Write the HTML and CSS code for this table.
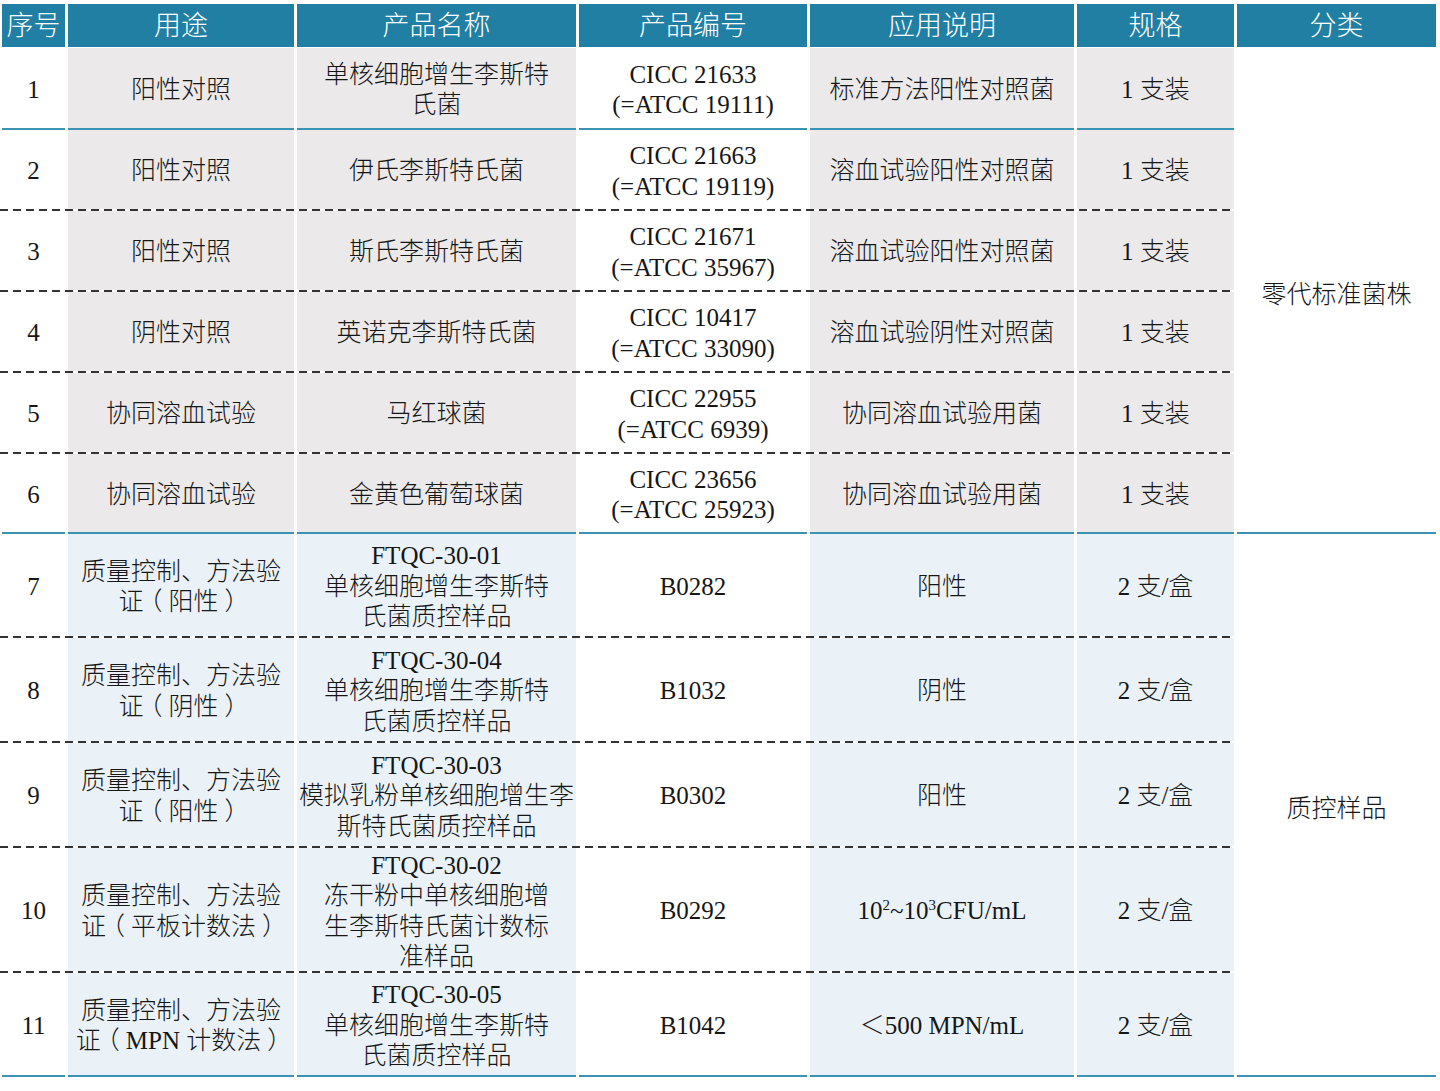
FILE: index.html
```html
<!DOCTYPE html>
<html lang="zh">
<head>
<meta charset="utf-8">
<title>产品列表</title>
<link rel="stylesheet" href="styles.css">
</head>
<body>
<div class="table">
  <div class="head">
    <div class="h">序号</div>
    <div class="h">用途</div>
    <div class="h">产品名称</div>
    <div class="h">产品编号</div>
    <div class="h">应用说明</div>
    <div class="h">规格</div>
    <div class="h">分类</div>
  </div>
  <div class="body">
    <!-- row 1 -->
    <div class="c end">1</div>
    <div class="c g end">阳性对照</div>
    <div class="c g end">单核细胞增生李斯特<br>氏菌</div>
    <div class="c end">CICC 21633<br>(=ATCC 19111)</div>
    <div class="c g end">标准方法阳性对照菌</div>
    <div class="c g end">1 支装</div>
    <div class="c cat cat1 end">零代标准菌株</div>
    <!-- row 2 -->
    <div class="c">2</div>
    <div class="c g">阳性对照</div>
    <div class="c g">伊氏李斯特氏菌</div>
    <div class="c">CICC 21663<br>(=ATCC 19119)</div>
    <div class="c g">溶血试验阳性对照菌</div>
    <div class="c g">1 支装</div>
    <div class="dash"></div>
    <!-- row 3 -->
    <div class="c">3</div>
    <div class="c g">阳性对照</div>
    <div class="c g">斯氏李斯特氏菌</div>
    <div class="c">CICC 21671<br>(=ATCC 35967)</div>
    <div class="c g">溶血试验阳性对照菌</div>
    <div class="c g">1 支装</div>
    <div class="dash"></div>
    <!-- row 4 -->
    <div class="c">4</div>
    <div class="c g">阴性对照</div>
    <div class="c g">英诺克李斯特氏菌</div>
    <div class="c">CICC 10417<br>(=ATCC 33090)</div>
    <div class="c g">溶血试验阴性对照菌</div>
    <div class="c g">1 支装</div>
    <div class="dash"></div>
    <!-- row 5 -->
    <div class="c">5</div>
    <div class="c g">协同溶血试验</div>
    <div class="c g">马红球菌</div>
    <div class="c">CICC 22955<br>(=ATCC 6939)</div>
    <div class="c g">协同溶血试验用菌</div>
    <div class="c g">1 支装</div>
    <div class="dash"></div>
    <!-- row 6 -->
    <div class="c end">6</div>
    <div class="c g end">协同溶血试验</div>
    <div class="c g end">金黄色葡萄球菌</div>
    <div class="c end">CICC 23656<br>(=ATCC 25923)</div>
    <div class="c g end">协同溶血试验用菌</div>
    <div class="c g end">1 支装</div>
    <!-- row 7 -->
    <div class="c">7</div>
    <div class="c b"><span>质量控制、方法验<br><span class="sl">证</span><span class="po">（</span>阳性<span class="pc">）</span></span></div>
    <div class="c b">FTQC-30-01<br>单核细胞增生李斯特<br>氏菌质控样品</div>
    <div class="c">B0282</div>
    <div class="c b">阳性</div>
    <div class="c b">2 支/盒</div>
    <div class="c cat cat2 end">质控样品</div>
    <div class="dash"></div>
    <!-- row 8 -->
    <div class="c">8</div>
    <div class="c b"><span>质量控制、方法验<br><span class="sl">证</span><span class="po">（</span>阴性<span class="pc">）</span></span></div>
    <div class="c b">FTQC-30-04<br>单核细胞增生李斯特<br>氏菌质控样品</div>
    <div class="c">B1032</div>
    <div class="c b">阴性</div>
    <div class="c b">2 支/盒</div>
    <div class="dash"></div>
    <!-- row 9 -->
    <div class="c">9</div>
    <div class="c b"><span>质量控制、方法验<br><span class="sl">证</span><span class="po">（</span>阳性<span class="pc">）</span></span></div>
    <div class="c b">FTQC-30-03<br>模拟乳粉单核细胞增生李<br>斯特氏菌质控样品</div>
    <div class="c">B0302</div>
    <div class="c b">阳性</div>
    <div class="c b">2 支/盒</div>
    <div class="dash"></div>
    <!-- row 10 -->
    <div class="c">10</div>
    <div class="c b"><span>质量控制、方法验<br><span class="sl">证</span><span class="po">（</span>平板计数法<span class="pc">）</span></span></div>
    <div class="c b">FTQC-30-02<br>冻干粉中单核细胞增<br>生李斯特氏菌计数标<br>准样品</div>
    <div class="c">B0292</div>
    <div class="c b"><span>10<sup class="sup">2</sup>~10<sup class="sup">3</sup>CFU/mL</span></div>
    <div class="c b">2 支/盒</div>
    <div class="dash"></div>
    <!-- row 11 -->
    <div class="c end">11</div>
    <div class="c b end"><span>质量控制、方法验<br><span class="sl">证</span><span class="po">（</span>MPN 计数法<span class="pc">）</span></span></div>
    <div class="c b end">FTQC-30-05<br>单核细胞增生李斯特<br>氏菌质控样品</div>
    <div class="c end">B1042</div>
    <div class="c b end">＜500 MPN/mL</div>
    <div class="c b end">2 支/盒</div>
  </div>
</div>
</body>
</html>
```

FILE: styles.css
```css
html, body {
  margin: 0;
  padding: 0;
  background: #ffffff;
}

body {
  font-family: "Liberation Serif", "Noto Sans CJK SC", serif;
  font-weight: 300;
  color: #161616;
  text-spacing-trim: space-all;
}

.table {
  margin: 4px 0 0 2px;
  width: 1434px;
}

.head,
.body {
  display: grid;
  grid-template-columns: 63px 226px 279px 228px 264px 157px 199px;
  column-gap: 3px;
}

.head {
  height: 42px;
  margin-bottom: 2px;
}

.h {
  background: #217fa3;
  color: #ffffff;
  font-family: "Noto Sans CJK SC", sans-serif;
  font-weight: 300;
  font-size: 27px;
  display: flex;
  align-items: center;
  justify-content: center;
  white-space: nowrap;
  box-sizing: border-box;
  padding-bottom: 4px;
}

.body {
  grid-template-rows: 82px 79px 2px 79px 2px 79px 2px 79px 2px 80px 102px 2px 103px 2px 103px 2px 123px 2px 104px;
}

.c {
  display: flex;
  align-items: center;
  justify-content: center;
  text-align: center;
  font-size: 25px;
  line-height: 30.5px;
  white-space: nowrap;
  box-sizing: border-box;
  padding-top: 4px;
}

.g {
  background: #ebe9ea;
}

.b {
  background: #eaf2f8;
}

.end {
  border-bottom: 2px solid #3b93b3;
}

.cat {
  font-family: "Noto Sans CJK SC", sans-serif;
}

.cat1 {
  grid-row: span 10;
}

.cat2 {
  grid-row: span 9;
}

.dash {
  grid-column: 1 / 7;
  margin-left: -2px;
  background: repeating-linear-gradient(90deg, #333333 0 8px, transparent 8px 13px);
}

.sup {
  font-size: 15px;
  line-height: 0;
  vertical-align: 9px;
}

.sl {
  letter-spacing: -6px;
}

.po {
  letter-spacing: 6px;
}

.pc {
  margin-left: 6px;
  letter-spacing: -6px;
}
```
